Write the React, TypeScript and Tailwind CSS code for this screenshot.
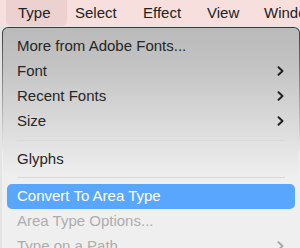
import React from 'react';

const Chevron: React.FC<{ color: string }> = ({ color }) => (
  <svg width="7" height="10" viewBox="0 0 7 10" fill="none">
    <polyline points="1.5,1.2 5.5,5 1.5,8.8" stroke={color} strokeWidth="1.9" strokeLinecap="round" strokeLinejoin="round" />
  </svg>
);

type Item = { label: string; sub?: boolean; disabled?: boolean; active?: boolean };

const MenuItem: React.FC<{ item: Item }> = ({ item }) => (
  <div
    className={
      'h-[25px] flex items-center justify-between pl-[10px] pr-[11px] rounded-[5px] whitespace-nowrap ' +
      (item.active ? 'bg-[#59a6ff] text-white' : item.disabled ? 'text-[#adadad]' : 'text-[#262626]')
    }
  >
    <span>{item.label}</span>
    {item.sub && <Chevron color={item.disabled ? '#a8a8a8' : '#1f1f1f'} />}
  </div>
);

const Separator: React.FC<{ top: string; bottom: string }> = ({ top, bottom }) => (
  <div className={`${top} ${bottom} px-[10px]`}>
    <div className="h-[1px] bg-[#d9d9d9]"></div>
  </div>
);

export default function App() {
  return (
    <div
      className="w-[300px] h-[248px] overflow-hidden bg-[#e4e4e4] text-[15px]"
      style={{ fontFamily: '"Liberation Sans", Arial, sans-serif' }}
    >
      {/* Menu bar */}
      <div className="h-[26px] bg-[#f7dfdd] flex items-stretch text-[#222] whitespace-nowrap overflow-hidden">
        <div className="shrink-0 ml-[6px] w-[61px] pl-[12px] flex items-center bg-[#ecd1d0] rounded-b-[5px]">Type</div>
        <div className="shrink-0 w-[68px] pl-[8px] flex items-center">Select</div>
        <div className="shrink-0 w-[64px] pl-[8px] flex items-center">Effect</div>
        <div className="shrink-0 w-[57px] pl-[8px] flex items-center">View</div>
        <div className="shrink-0 pl-[8px] flex items-center">Window</div>
      </div>

      {/* Dropdown panel */}
      <div className="mt-[1px] ml-[2px] w-[298px] h-[230px] pl-[1px] pr-[1px] pt-[0.5px] rounded-t-[6px] bg-[linear-gradient(180deg,#3a3a3a_0%,#9a9a9a_30%,#efefef_55%)]">
        <div className="h-full rounded-t-[5px] bg-[linear-gradient(180deg,#bababa_0%,#c2c2c2_15%,#efefef_65%)] px-[4px] pt-[6px]">
          <MenuItem item={{ label: 'More from Adobe Fonts...' }} />
          <MenuItem item={{ label: 'Font', sub: true }} />
          <MenuItem item={{ label: 'Recent Fonts', sub: true }} />
          <MenuItem item={{ label: 'Size', sub: true }} />
          <Separator top="pt-[6px]" bottom="pb-[6px]" />
          <MenuItem item={{ label: 'Glyphs' }} />
          <Separator top="pt-[5px]" bottom="pb-[6px]" />
          <MenuItem item={{ label: 'Convert To Area Type', active: true }} />
          <MenuItem item={{ label: 'Area Type Options...', disabled: true }} />
          <MenuItem item={{ label: 'Type on a Path', disabled: true, sub: true }} />
        </div>
      </div>
    </div>
  );
}
